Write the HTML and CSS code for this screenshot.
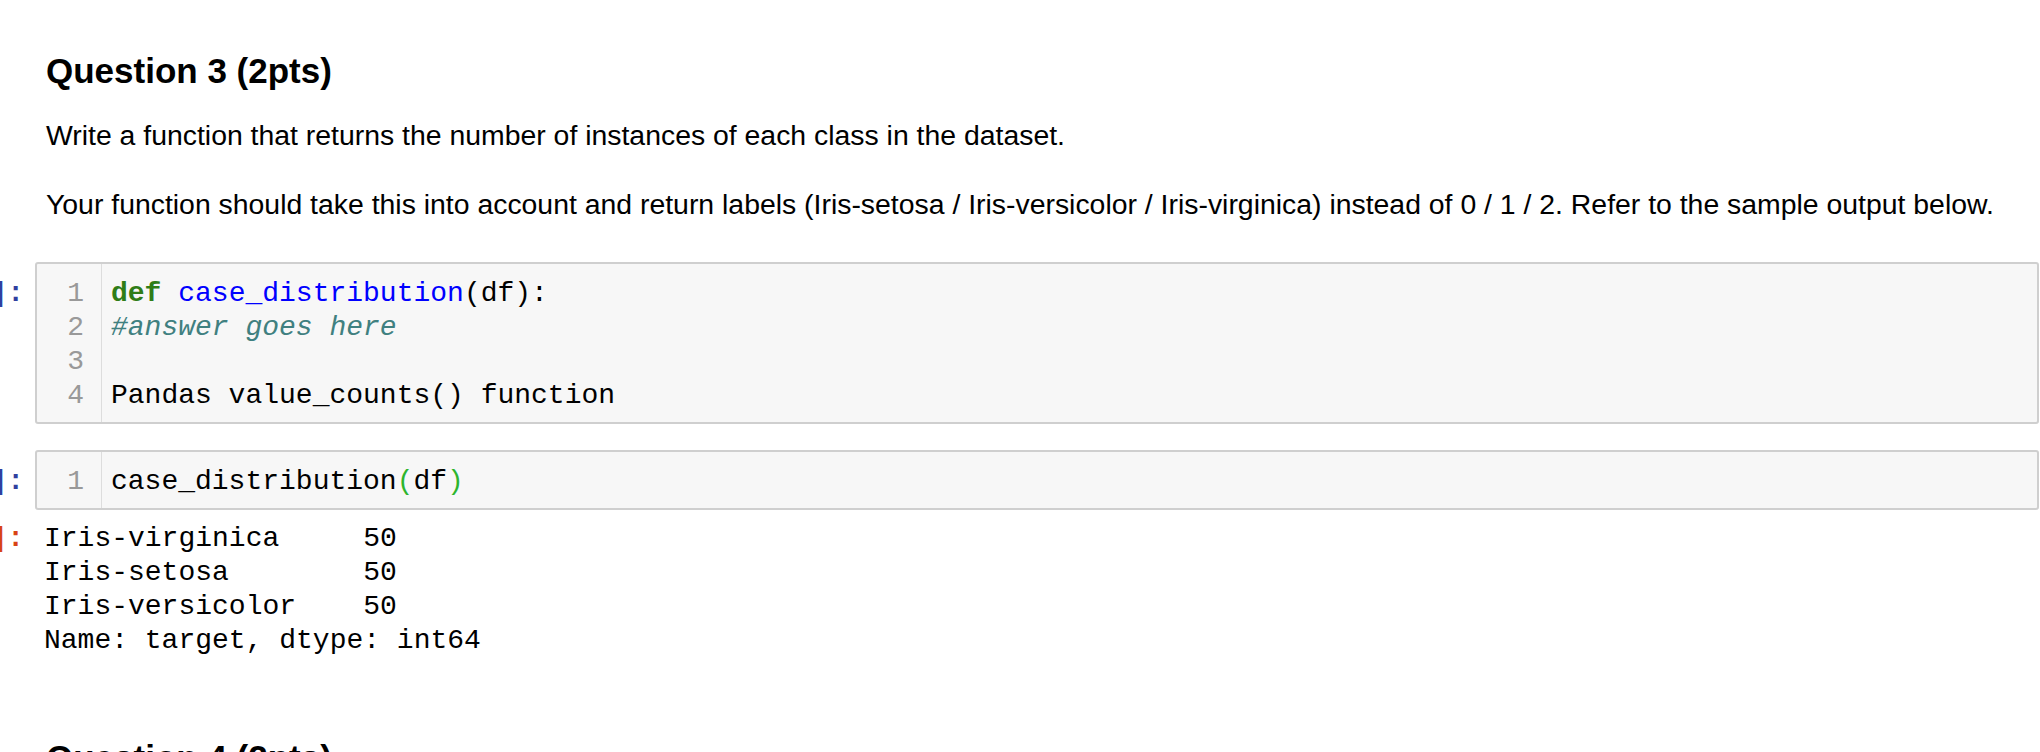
FILE: index.html
```html
<!DOCTYPE html>
<html>
<head>
<meta charset="utf-8">
<link rel="stylesheet" href="styles.css">
</head>
<body>
<div class="nb">
  <div class="cell md first">
    <div class="prompt"></div>
    <div class="md-body">
      <h2>Question 3 (2pts)</h2>
      <p>Write a function that returns the number of instances of each class in the dataset.</p>
      <p>Your function should take this into account and return labels (Iris-setosa / Iris-versicolor / Iris-virginica) instead of 0 / 1 / 2. Refer to the sample output below.</p>
    </div>
  </div>

  <div class="cell code c1">
    <div class="prompt in"><span>In [ ]:</span></div>
    <div class="input">
      <div class="gutter"><div>1</div><div>2</div><div>3</div><div>4</div></div>
      <div class="lines">
        <div class="line"><span class="kw">def</span> <span class="def">case_distribution</span>(df):</div>
        <div class="line"><span class="cm">#answer goes here</span></div>
        <div class="line">&nbsp;</div>
        <div class="line">Pandas value_counts() function</div>
      </div>
    </div>
  </div>

  <div class="cell code c2">
    <div class="prompt in"><span>In [ ]:</span></div>
    <div class="input">
      <div class="gutter"><div>1</div></div>
      <div class="lines">
        <div class="line">case_distribution<span class="mb">(</span>df<span class="mb">)</span></div>
      </div>
    </div>
  </div>

  <div class="cell out">
    <div class="prompt outp"><span>Out[ ]:</span></div>
    <pre class="output">Iris-virginica     50
Iris-setosa        50
Iris-versicolor    50
Name: target, dtype: int64</pre>
  </div>

  <div class="cell md last">
    <div class="prompt"></div>
    <div class="md-body">
      <h2>Question 4 (2pts)</h2>
    </div>
  </div>
</div>
</body>
</html>
```

FILE: styles.css
```css
html, body {
  margin: 0;
  padding: 0;
  background: #ffffff;
}
body {
  overflow: hidden;
}
.nb {
  padding-right: 1px;
}
.cell {
  display: flex;
  align-items: flex-start;
  gap: 11px;
}
.prompt {
  width: 24px;
  flex: none;
  display: flex;
  justify-content: flex-end;
  overflow: hidden;
  white-space: pre;
  font-family: "Liberation Mono", "Courier New", monospace;
  font-size: 28px;
  line-height: 34px;
  font-weight: bold;
}
.prompt.in {
  color: #303f9f;
  padding-top: 15px;
}
.prompt.outp {
  color: #d84315;
}
.md-body {
  flex: 1;
  padding-left: 11px;
  font-family: "Liberation Sans", Arial, Helvetica, sans-serif;
  color: #000;
}
.md-body h2 {
  font-size: 35px;
  line-height: 40px;
  font-weight: bold;
  margin: 0 0 27.3px;
}
.md-body p {
  font-size: 28.4px;
  line-height: 34px;
  margin: 0 0 34.5px;
}
.md-body p:last-child {
  margin-bottom: 0;
}
.md.first {
  padding-top: 51px;
}
.c1 {
  margin-top: 41.2px;
}
.c2 {
  margin-top: 26px;
}
.out {
  margin-top: 12.5px;
}
.md.last {
  margin-top: 80px;
}
.input {
  flex: 1;
  display: flex;
  border: 2px solid #cfcfcf;
  border-radius: 3px;
  background: #f7f7f7;
  font-family: "Liberation Mono", "Courier New", monospace;
  font-size: 28px;
  line-height: 34px;
  color: #000;
}
.gutter {
  width: 65px;
  flex: none;
  box-sizing: border-box;
  border-right: 1px solid #dddddd;
  padding: 13px 17px 9px 0;
  text-align: right;
  color: #999999;
}
.lines {
  flex: 1;
  padding: 13px 9px 9px;
}
.line {
  white-space: pre;
}
.kw {
  color: #2f7d17;
  font-weight: bold;
}
.def {
  color: #0000ff;
}
.cm {
  color: #408080;
  font-style: italic;
}
.mb {
  color: #2db52d;
}
.output {
  flex: 1;
  margin: 0;
  padding-left: 9px;
  font-family: "Liberation Mono", "Courier New", monospace;
  font-size: 28px;
  line-height: 34px;
  color: #000;
}
```
